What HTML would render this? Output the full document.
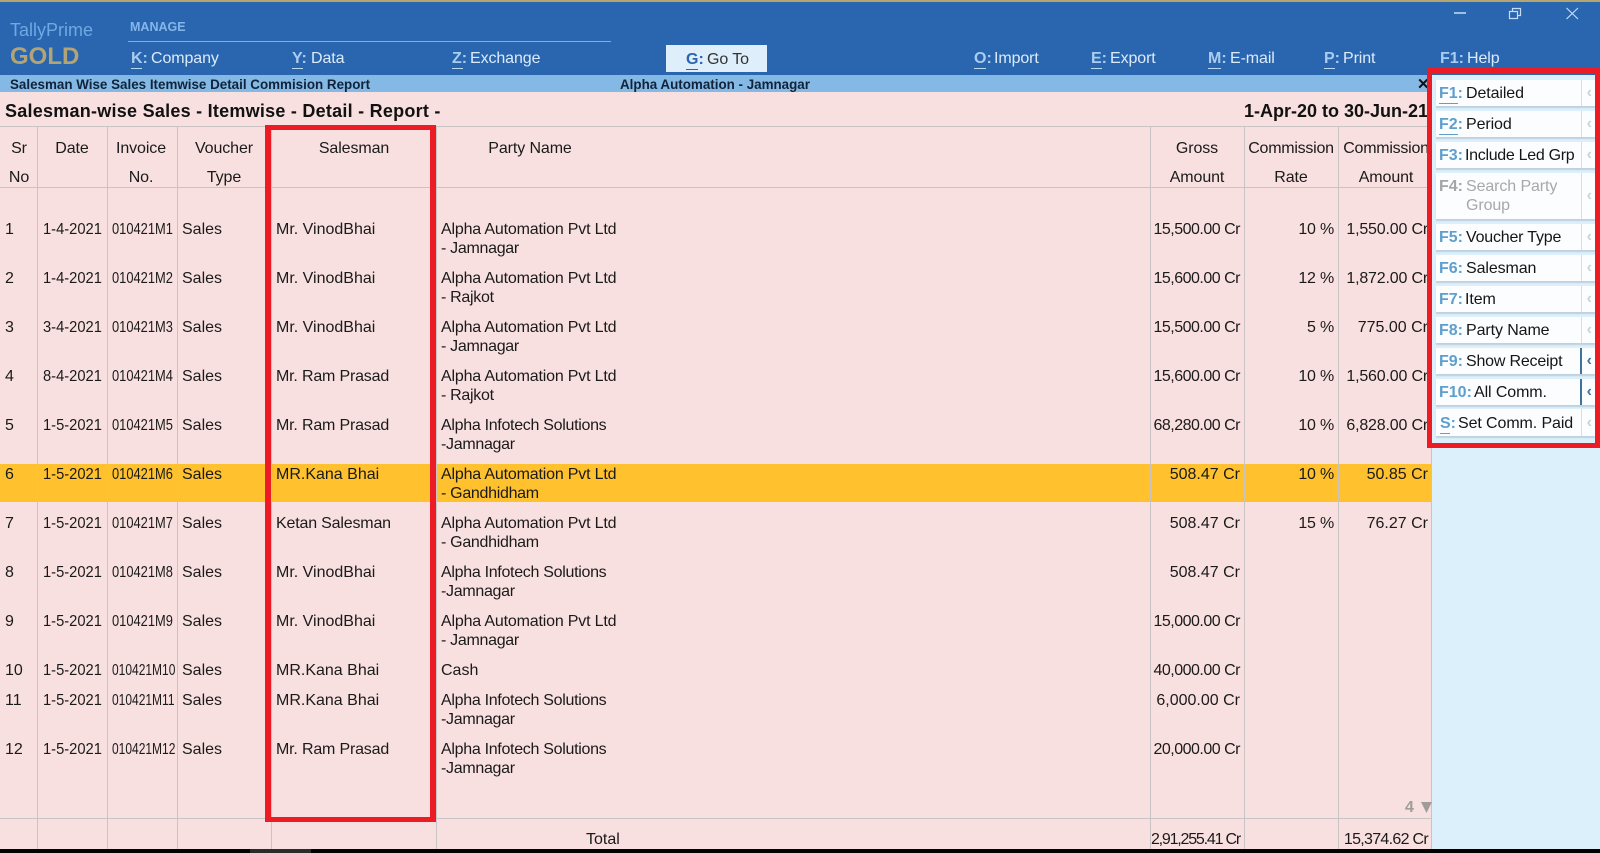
<!DOCTYPE html>
<html><head><meta charset="utf-8"><title>TallyPrime</title>
<style>
html,body{margin:0;padding:0;width:1600px;height:853px;overflow:hidden;background:#000}
body{position:relative;font-family:"Liberation Sans",Arial,sans-serif;font-size:16px;color:#1a1a1a}
div{position:absolute}
.t{position:absolute;white-space:nowrap;line-height:19px;height:19px;margin-top:1px}
.r{position:absolute;white-space:nowrap;line-height:19px;height:19px;text-align:right;margin-top:1px}
.c{position:absolute;white-space:nowrap;line-height:19px;height:19px;text-align:center;transform:translateX(-50%);margin-top:1px;letter-spacing:-.1px}
.v{position:absolute;width:1px;background:#c9c3c3}
.h{position:absolute;height:1px;left:0;width:1432px;background:#c9c3c3}
.d{transform:scaleX(.92);transform-origin:0 50%}
.i{transform:scaleX(.805);transform-origin:0 50%}
.w{transform:scaleX(.75);transform-origin:0 50%}
.a{letter-spacing:-.18px}
.f{letter-spacing:-.3px}
.n{letter-spacing:-.5px;right:360px}
.g{right:360px}
.p{right:266px;letter-spacing:-.2px}
.q{right:172px;letter-spacing:-.18px}
.k{position:absolute;white-space:nowrap;line-height:19px;font-weight:bold;color:#a9cdf0;margin-top:1px}
.m{position:absolute;white-space:nowrap;line-height:19px;color:#dcebf9;margin-top:1px;letter-spacing:-.1px}
.u{position:absolute;height:1px;background:#bcd9f3}
.b{position:absolute;left:1436px;width:159px;background:#fbfdff;box-shadow:0 2px 1px #bfd0de}
.b i{position:absolute;right:13px;top:0;bottom:0;width:1px;background:#d5dfe7}
.b b{position:absolute;left:3px;top:3.5px;line-height:19px;color:#5d9fcd;white-space:nowrap}
.b span{position:absolute;top:3.5px;line-height:19px;white-space:nowrap;color:#151515;letter-spacing:-.1px}
.b em{position:absolute;right:3px;top:3px;line-height:19px;font-style:normal;font-weight:bold;color:#c6d3dd}
.b u{position:absolute;left:3px;top:23px;height:1px;background:#5d9fcd}
.on i{background:#3f729c;width:2px}.on em{color:#3f729c}
.off b{color:#a5a5a5}.off span{color:#a8a8a8}
</style></head><body>
<div style="left:0;top:0;width:1600px;height:2px;background:#b5a670"></div>
<div style="left:0;top:2px;width:1600px;height:73px;background:#2a66b0"></div>
<div style="left:0;top:75px;width:1600px;height:17px;background:#85b9e5"></div>
<div style="left:0;top:92px;width:1432px;height:757px;background:#f9e0e0"></div>
<div style="left:1432px;top:75px;width:168px;height:774px;background:#dcf0fc"></div>
<div style="left:0;top:849px;width:1600px;height:4px;background:#000"></div>
<div style="left:250px;top:849px;width:61px;height:4px;background:#2b2b2b"></div>

<div class="t" style="left:10px;top:20px;font-size:18px;color:#6fa8e2">TallyPrime</div>
<div class="t" style="left:10px;top:46px;font-size:24px;font-weight:bold;color:#b3a475">GOLD</div>
<div class="t" style="left:130px;top:17px;font-size:12.5px;font-weight:bold;color:#84b6ea">MANAGE</div>
<div style="left:128px;top:41px;width:483px;height:1px;background:#79b0e6"></div>

<div class="k" style="left:131px;top:48px">K:</div><div class="u" style="left:131px;top:68px;width:11px"></div><div class="m" style="left:151px;top:48px">Company</div>
<div class="k" style="left:292px;top:48px">Y:</div><div class="u" style="left:292px;top:68px;width:11px"></div><div class="m" style="left:311px;top:48px">Data</div>
<div class="k" style="left:452px;top:48px">Z:</div><div class="u" style="left:452px;top:68px;width:11px"></div><div class="m" style="left:470px;top:48px">Exchange</div>
<div style="left:666px;top:45px;width:101px;height:27px;background:#deeefb"></div>
<div class="k" style="left:686px;top:49px;color:#2a66b0">G:</div><div class="u" style="left:686px;top:69px;width:12px;background:#2a66b0"></div><div class="m" style="left:707px;top:49px;color:#333">Go To</div>
<div class="k" style="left:974px;top:48px">O:</div><div class="u" style="left:974px;top:68px;width:12px"></div><div class="m" style="left:994px;top:48px">Import</div>
<div class="k" style="left:1091px;top:48px">E:</div><div class="u" style="left:1091px;top:68px;width:11px"></div><div class="m" style="left:1110px;top:48px">Export</div>
<div class="k" style="left:1208px;top:48px">M:</div><div class="u" style="left:1208px;top:68px;width:13px"></div><div class="m" style="left:1230px;top:48px">E-mail</div>
<div class="k" style="left:1324px;top:48px">P:</div><div class="u" style="left:1324px;top:68px;width:11px"></div><div class="m" style="left:1343px;top:48px">Print</div>
<div class="k" style="left:1440px;top:48px">F1:</div><div class="m" style="left:1467px;top:48px">Help</div>

<svg style="position:absolute;left:1440px;top:0" width="160" height="30" fill="none" stroke="#c4dcf4" stroke-width="1.2">
<path d="M14 13H26" stroke-width="1.5"/>
<path d="M69.5 11.5h8v7h-8z M72.5 11.5v-3h8v7h-3"/>
<path d="M126.5 8 138 19M138 8 126.5 19"/>
</svg>

<div class="t" style="left:10px;top:74px;font-size:13.4px;font-weight:bold;color:#10233a">Salesman Wise Sales Itemwise Detail Commision Report</div>
<div class="t" style="left:620px;top:74px;font-size:13.4px;font-weight:bold;color:#10233a">Alpha Automation - Jamnagar</div>
<div class="t" style="left:1417px;top:74px;font-size:15px;font-weight:bold;color:#111">&#10005;</div>

<div class="t" style="left:5px;top:101px;font-size:18px;font-weight:bold;color:#111;letter-spacing:.25px">Salesman-wise Sales - Itemwise - Detail - Report -</div>
<div class="r" style="right:172px;top:101px;font-size:18px;font-weight:bold;color:#111">1-Apr-20 to 30-Jun-21</div>

<div style="left:0;top:464px;width:1432px;height:38px;background:#ffc12e"></div>

<div class="h" style="top:126px"></div><div class="h" style="top:187px"></div><div class="h" style="top:818px"></div>
<div class="v" style="left:37px;top:126px;height:723px"></div>
<div class="v" style="left:107px;top:126px;height:723px"></div>
<div class="v" style="left:177px;top:126px;height:723px"></div>
<div class="v" style="left:271px;top:126px;height:723px"></div>
<div class="v" style="left:436px;top:126px;height:723px"></div>
<div class="v" style="left:1150px;top:126px;height:723px"></div>
<div class="v" style="left:1244px;top:126px;height:723px"></div>
<div class="v" style="left:1338px;top:126px;height:723px"></div>
<div class="v" style="left:1431px;top:126px;height:723px"></div>

<div class="c" style="left:19px;top:138px">Sr</div><div class="c" style="left:19px;top:167px">No</div>
<div class="c" style="left:72px;top:138px">Date</div>
<div class="c" style="left:141px;top:138px">Invoice</div><div class="c" style="left:141px;top:167px">No.</div>
<div class="c" style="left:224px;top:138px">Voucher</div><div class="c" style="left:224px;top:167px">Type</div>
<div class="c" style="left:354px;top:138px">Salesman</div>
<div class="c" style="left:530px;top:138px">Party Name</div>
<div class="c" style="left:1197px;top:138px">Gross</div><div class="c" style="left:1197px;top:167px">Amount</div>
<div class="c" style="left:1291px;top:138px;letter-spacing:-.25px">Commission</div><div class="c" style="left:1291px;top:167px">Rate</div>
<div class="c" style="left:1386px;top:138px;letter-spacing:-.25px">Commission</div><div class="c" style="left:1386px;top:167px">Amount</div>

<!-- rows -->
<div class="t" style="left:5px;top:219px">1</div><div class="t d" style="left:43px;top:219px">1-4-2021</div><div class="t i" style="left:112px;top:219px">010421M1</div><div class="t" style="left:182px;top:219px">Sales</div><div class="t" style="left:276px;top:219px">Mr. VinodBhai</div><div class="t a" style="left:441px;top:219px">Alpha Automation Pvt Ltd</div><div class="t f" style="left:441px;top:238px">- Jamnagar</div><div class="r n" style="top:219px">15,500.00 Cr</div><div class="r p" style="top:219px">10 %</div><div class="r q" style="top:219px">1,550.00 Cr</div>

<div class="t" style="left:5px;top:268px">2</div><div class="t d" style="left:43px;top:268px">1-4-2021</div><div class="t i" style="left:112px;top:268px">010421M2</div><div class="t" style="left:182px;top:268px">Sales</div><div class="t" style="left:276px;top:268px">Mr. VinodBhai</div><div class="t a" style="left:441px;top:268px">Alpha Automation Pvt Ltd</div><div class="t f" style="left:441px;top:287px">- Rajkot</div><div class="r n" style="top:268px">15,600.00 Cr</div><div class="r p" style="top:268px">12 %</div><div class="r q" style="top:268px">1,872.00 Cr</div>

<div class="t" style="left:5px;top:317px">3</div><div class="t d" style="left:43px;top:317px">3-4-2021</div><div class="t i" style="left:112px;top:317px">010421M3</div><div class="t" style="left:182px;top:317px">Sales</div><div class="t" style="left:276px;top:317px">Mr. VinodBhai</div><div class="t a" style="left:441px;top:317px">Alpha Automation Pvt Ltd</div><div class="t f" style="left:441px;top:336px">- Jamnagar</div><div class="r n" style="top:317px">15,500.00 Cr</div><div class="r p" style="top:317px">5 %</div><div class="r" style="right:172px;top:317px">775.00 Cr</div>

<div class="t" style="left:5px;top:366px">4</div><div class="t d" style="left:43px;top:366px">8-4-2021</div><div class="t i" style="left:112px;top:366px">010421M4</div><div class="t" style="left:182px;top:366px">Sales</div><div class="t a" style="left:276px;top:366px">Mr. Ram Prasad</div><div class="t a" style="left:441px;top:366px">Alpha Automation Pvt Ltd</div><div class="t f" style="left:441px;top:385px">- Rajkot</div><div class="r n" style="top:366px">15,600.00 Cr</div><div class="r p" style="top:366px">10 %</div><div class="r q" style="top:366px">1,560.00 Cr</div>

<div class="t" style="left:5px;top:415px">5</div><div class="t d" style="left:43px;top:415px">1-5-2021</div><div class="t i" style="left:112px;top:415px">010421M5</div><div class="t" style="left:182px;top:415px">Sales</div><div class="t a" style="left:276px;top:415px">Mr. Ram Prasad</div><div class="t f" style="left:441px;top:415px">Alpha Infotech Solutions</div><div class="t f" style="left:441px;top:434px">-Jamnagar</div><div class="r n" style="top:415px">68,280.00 Cr</div><div class="r p" style="top:415px">10 %</div><div class="r q" style="top:415px">6,828.00 Cr</div>

<div class="t" style="left:5px;top:464px">6</div><div class="t d" style="left:43px;top:464px">1-5-2021</div><div class="t i" style="left:112px;top:464px">010421M6</div><div class="t" style="left:182px;top:464px">Sales</div><div class="t" style="left:276px;top:464px">MR.Kana Bhai</div><div class="t a" style="left:441px;top:464px">Alpha Automation Pvt Ltd</div><div class="t f" style="left:441px;top:483px">- Gandhidham</div><div class="r g" style="top:464px">508.47 Cr</div><div class="r p" style="top:464px">10 %</div><div class="r" style="right:172px;top:464px">50.85 Cr</div>

<div class="t" style="left:5px;top:513px">7</div><div class="t d" style="left:43px;top:513px">1-5-2021</div><div class="t i" style="left:112px;top:513px">010421M7</div><div class="t" style="left:182px;top:513px">Sales</div><div class="t a" style="left:276px;top:513px">Ketan Salesman</div><div class="t a" style="left:441px;top:513px">Alpha Automation Pvt Ltd</div><div class="t f" style="left:441px;top:532px">- Gandhidham</div><div class="r g" style="top:513px">508.47 Cr</div><div class="r p" style="top:513px">15 %</div><div class="r" style="right:172px;top:513px">76.27 Cr</div>

<div class="t" style="left:5px;top:562px">8</div><div class="t d" style="left:43px;top:562px">1-5-2021</div><div class="t i" style="left:112px;top:562px">010421M8</div><div class="t" style="left:182px;top:562px">Sales</div><div class="t" style="left:276px;top:562px">Mr. VinodBhai</div><div class="t f" style="left:441px;top:562px">Alpha Infotech Solutions</div><div class="t f" style="left:441px;top:581px">-Jamnagar</div><div class="r g" style="top:562px">508.47 Cr</div>

<div class="t" style="left:5px;top:611px">9</div><div class="t d" style="left:43px;top:611px">1-5-2021</div><div class="t i" style="left:112px;top:611px">010421M9</div><div class="t" style="left:182px;top:611px">Sales</div><div class="t" style="left:276px;top:611px">Mr. VinodBhai</div><div class="t a" style="left:441px;top:611px">Alpha Automation Pvt Ltd</div><div class="t f" style="left:441px;top:630px">- Jamnagar</div><div class="r n" style="top:611px">15,000.00 Cr</div>

<div class="t" style="left:5px;top:660px">10</div><div class="t d" style="left:43px;top:660px">1-5-2021</div><div class="t w" style="left:112px;top:660px">010421M10</div><div class="t" style="left:182px;top:660px">Sales</div><div class="t" style="left:276px;top:660px">MR.Kana Bhai</div><div class="t" style="left:441px;top:660px">Cash</div><div class="r n" style="top:660px">40,000.00 Cr</div>

<div class="t" style="left:5px;top:690px">11</div><div class="t d" style="left:43px;top:690px">1-5-2021</div><div class="t w" style="left:112px;top:690px">010421M11</div><div class="t" style="left:182px;top:690px">Sales</div><div class="t" style="left:276px;top:690px">MR.Kana Bhai</div><div class="t f" style="left:441px;top:690px">Alpha Infotech Solutions</div><div class="t f" style="left:441px;top:709px">-Jamnagar</div><div class="r g" style="top:690px">6,000.00 Cr</div>

<div class="t" style="left:5px;top:739px">12</div><div class="t d" style="left:43px;top:739px">1-5-2021</div><div class="t w" style="left:112px;top:739px">010421M12</div><div class="t" style="left:182px;top:739px">Sales</div><div class="t a" style="left:276px;top:739px">Mr. Ram Prasad</div><div class="t f" style="left:441px;top:739px">Alpha Infotech Solutions</div><div class="t f" style="left:441px;top:758px">-Jamnagar</div><div class="r n" style="top:739px">20,000.00 Cr</div>

<div class="t" style="left:586px;top:829px">Total</div>
<div class="r" style="right:360px;top:829px;letter-spacing:-1.2px">2,91,255.41 Cr</div>
<div class="r" style="right:172px;top:829px;letter-spacing:-.7px">15,374.62 Cr</div>

<div class="t" style="left:1405px;top:797px;font-weight:bold;color:#a09c9c">4</div>
<svg style="position:absolute;left:1421px;top:802px" width="11" height="11"><path d="M0 0H11L5.5 11Z" fill="#a09c9c"/></svg>

<!-- side buttons -->
<div class="b" style="top:80px;height:26px"><i></i><b>F1:</b><u style="width:19px"></u><span style="left:30px">Detailed</span><em>&#8249;</em></div>
<div class="b" style="top:111px;height:26px"><i></i><b>F2:</b><u style="width:19px"></u><span style="left:30px">Period</span><em>&#8249;</em></div>
<div class="b" style="top:142px;height:26px"><i></i><b>F3:</b><span style="left:29px;letter-spacing:-.3px">Include Led Grp</span><em>&#8249;</em></div>
<div class="b off" style="top:173px;height:46px"><i></i><b>F4:</b><span style="left:30px;color:#a8a8a8">Search Party<br>Group</span><em style="top:13px">&#8249;</em></div>
<div class="b" style="top:224px;height:26px"><i></i><b>F5:</b><span style="left:30px;letter-spacing:-.2px">Voucher Type</span><em>&#8249;</em></div>
<div class="b" style="top:255px;height:26px"><i></i><b>F6:</b><span style="left:30px">Salesman</span><em>&#8249;</em></div>
<div class="b" style="top:286px;height:26px"><i></i><b>F7:</b><span style="left:29px">Item</span><em>&#8249;</em></div>
<div class="b" style="top:317px;height:26px"><i></i><b>F8:</b><span style="left:30px">Party Name</span><em>&#8249;</em></div>
<div class="b on" style="top:348px;height:26px"><i></i><b>F9:</b><span style="left:30px;letter-spacing:-.2px">Show Receipt</span><em>&#8249;</em></div>
<div class="b on" style="top:379px;height:26px"><i></i><b>F10:</b><span style="left:38px">All Comm.</span><em>&#8249;</em></div>
<div class="b" style="top:409px;height:27px"><i></i><b style="left:4px;top:5px">S:</b><u style="left:4px;top:24px;width:10px"></u><span style="left:22px;top:5px">Set Comm. Paid</span><em style="top:4px">&#8249;</em></div>

<!-- red annotations -->
<div style="left:265px;top:125px;width:171px;height:697px;box-sizing:border-box;border:solid #ed1c24;border-width:5px 6px"></div>
<div style="left:1427px;top:68px;width:173px;height:380px;box-sizing:border-box;border:solid #ed1c24;border-width:6px 5px 5px 5px"></div>
</body></html>
